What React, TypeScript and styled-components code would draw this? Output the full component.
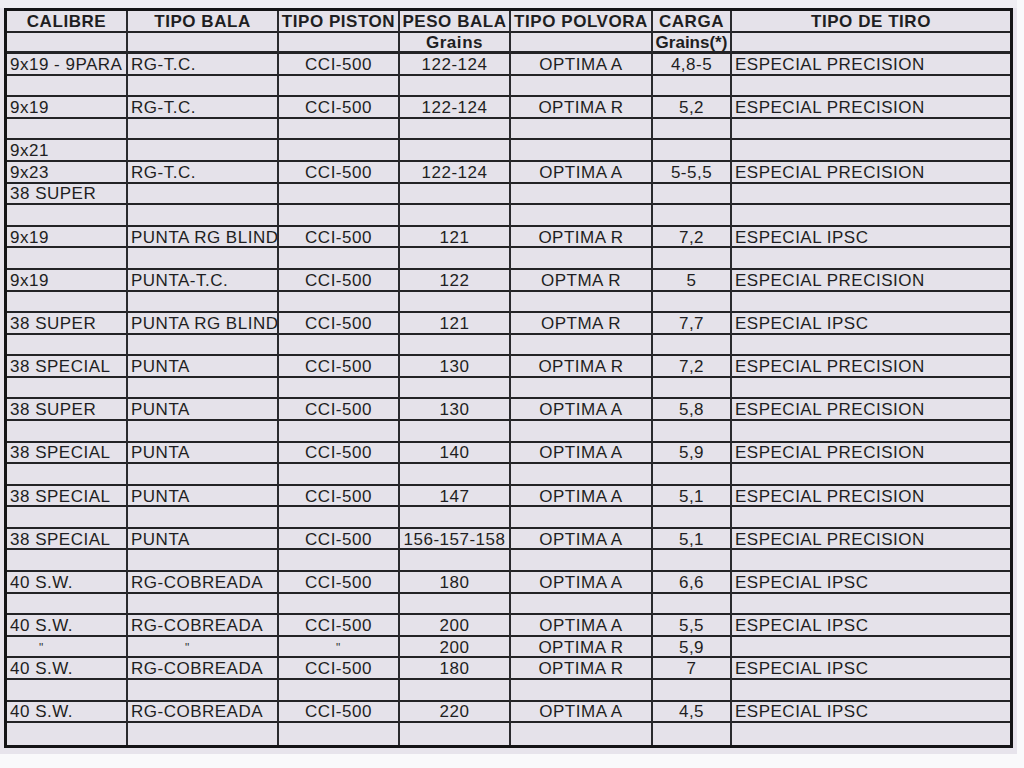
import React from "react";
import styled, { createGlobalStyle } from "styled-components";

const Global = createGlobalStyle`
  html, body { margin: 0; padding: 0; background: #f9f9fb; }
  body { font-family: "Liberation Sans", Arial, sans-serif; }
`;

const Paper = styled.div`
  width: 1017px;
  padding: 8px 4px 6px 4px;
  box-sizing: border-box;
  background: linear-gradient(#efeef3 0, #efeef3 8px, #e7e4ec 8px);
`;

const Sheet = styled.div`
  display: grid;
  grid-template-columns: 121px 151px 121px 111px 142px 79px 278px;
  grid-auto-rows: 21.59px;
  width: 1009px;
  box-sizing: border-box;
  border: 3px solid #141416;
  background: #e5e2ea;
  color: #1e1e22;
`;

type Align = "left" | "center";

const Cell = styled.div<{ $align: Align; $head?: boolean; $thick?: boolean; $tight?: boolean }>`
  box-sizing: border-box;
  display: flex;
  align-items: center;
  justify-content: ${(p) => (p.$align === "center" ? "center" : "flex-start")};
  padding: 2px 0 0 ${(p) => (p.$align === "center" ? "0" : "3px")};
  border-right: 2px solid #2a2a2e;
  border-bottom: ${(p) => (p.$thick ? "3px" : "2px")} solid #232326;
  font-size: 17px;
  letter-spacing: ${(p) => (p.$tight ? "0px" : p.$head ? "0.55px" : "0.5px")};
  font-weight: ${(p) => (p.$head ? 700 : 400)};
  white-space: nowrap;
  overflow: hidden;
  &:nth-child(7n) { border-right: none; }
  &:nth-last-child(-n + 7) { border-bottom: none; }
`;

const Ditto = styled.span<{ $shift: number }>`
  font-size: 12px;
  align-self: flex-start;
  padding-top: 2px;
  color: #333;
  margin-right: ${(p) => p.$shift}px;
`;

const aligns: Align[] = ["left", "left", "center", "center", "center", "center", "left"];

const head1 = ["CALIBRE", "TIPO BALA", "TIPO PISTON", "PESO BALA", "TIPO POLVORA", "CARGA", "TIPO DE TIRO"];
const head2 = ["", "", "", "Grains", "", "Grains(*)", ""];

const B: string[] = ["", "", "", "", "", "", ""];
const P = "ESPECIAL PRECISION";
const I = "ESPECIAL IPSC";

const rows: string[][] = [
  ["9x19 - 9PARA", "RG-T.C.", "CCI-500", "122-124", "OPTIMA A", "4,8-5", P],
  B,
  ["9x19", "RG-T.C.", "CCI-500", "122-124", "OPTIMA R", "5,2", P],
  B,
  ["9x21", "", "", "", "", "", ""],
  ["9x23", "RG-T.C.", "CCI-500", "122-124", "OPTIMA A", "5-5,5", P],
  ["38 SUPER", "", "", "", "", "", ""],
  B,
  ["9x19", "PUNTA RG BLIND", "CCI-500", "121", "OPTIMA R", "7,2", I],
  B,
  ["9x19", "PUNTA-T.C.", "CCI-500", "122", "OPTMA R", "5", P],
  B,
  ["38 SUPER", "PUNTA RG BLIND", "CCI-500", "121", "OPTMA R", "7,7", I],
  B,
  ["38 SPECIAL", "PUNTA", "CCI-500", "130", "OPTIMA R", "7,2", P],
  B,
  ["38 SUPER", "PUNTA", "CCI-500", "130", "OPTIMA A", "5,8", P],
  B,
  ["38 SPECIAL", "PUNTA", "CCI-500", "140", "OPTIMA A", "5,9", P],
  B,
  ["38 SPECIAL", "PUNTA", "CCI-500", "147", "OPTIMA A", "5,1", P],
  B,
  ["38 SPECIAL", "PUNTA", "CCI-500", "156-157-158", "OPTIMA A", "5,1", P],
  B,
  ["40 S.W.", "RG-COBREADA", "CCI-500", "180", "OPTIMA A", "6,6", I],
  B,
  ["40 S.W.", "RG-COBREADA", "CCI-500", "200", "OPTIMA A", "5,5", I],
  ['"', '"', '"', "200", "OPTIMA R", "5,9", ""],
  ["40 S.W.", "RG-COBREADA", "CCI-500", "180", "OPTIMA R", "7", I],
  B,
  ["40 S.W.", "RG-COBREADA", "CCI-500", "220", "OPTIMA A", "4,5", I],
  B,
];

const dittoShift = [50, 30, 0];

export default function App() {
  return (
    <>
      <Global />
      <Paper>
        <Sheet>
          {head1.map((h, i) => (
            <Cell key={`h1-${i}`} $align="center" $head>
              {h}
            </Cell>
          ))}
          {head2.map((h, i) => (
            <Cell key={`h2-${i}`} $align="center" $head $thick $tight={i === 5}>
              {h}
            </Cell>
          ))}
          {rows.map((r, ri) =>
            r.map((v, ci) =>
              v === '"' ? (
                <Cell key={`${ri}-${ci}`} $align="center">
                  <Ditto $shift={dittoShift[ci]}>"</Ditto>
                </Cell>
              ) : (
                <Cell key={`${ri}-${ci}`} $align={aligns[ci]}>
                  {v}
                </Cell>
              )
            )
          )}
        </Sheet>
      </Paper>
    </>
  );
}
